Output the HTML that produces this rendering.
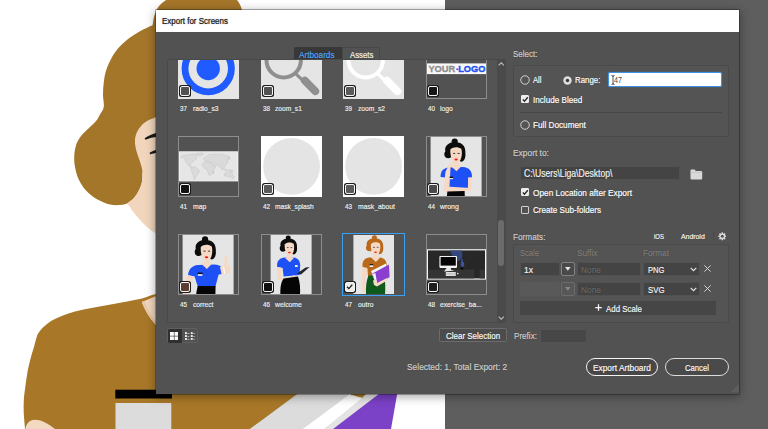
<!DOCTYPE html>
<html lang="en">
<head>
<meta charset="utf-8">
<title>Export for Screens</title>
<style>
*{box-sizing:border-box;margin:0;padding:0}
html,body{width:768px;height:429px;overflow:hidden;background:#5e5e5e}
body{position:relative;font-family:"Liberation Sans",sans-serif;font-size:9px;color:#fff}
#bg{position:absolute;left:0;top:0;width:768px;height:429px}
#dlg{position:absolute;left:156px;top:10px;width:583.4px;height:383.6px;background:#525252;box-shadow:0 2px 9px 1px rgba(0,0,0,.34),0 0 0 .8px rgba(20,20,20,.4)}
#titlebar{position:absolute;left:156px;top:10px;width:583.4px;height:21.9px;background:#fff}
.t{position:absolute;white-space:nowrap;line-height:12px;height:12px;transform-origin:0 50%;-webkit-text-stroke:0.2px currentColor;text-shadow:0 0 1.5px rgba(0,0,0,.35)}
.a{position:absolute}
.fld{position:absolute;background:#444;border-radius:2px;box-shadow:inset 0 0 0 1px rgba(255,255,255,.07)}
.box{position:absolute;border:1px solid #4a4a4a;border-radius:2px;background:rgba(255,255,255,.012)}
.radio{position:absolute;width:9.5px;height:9.5px;border-radius:50%;border:1px solid #e0e0e0}
.radio.on{background:#e4e4e4;border-color:#e4e4e4}
.radio.on::after{content:"";position:absolute;left:2px;top:2px;width:3.5px;height:3.5px;border-radius:50%;background:#3a3a3a}
.cb{position:absolute;width:8.2px;height:8.2px;border:1px solid #cfcfcf;border-radius:1px}
.cb.on{background:#ececec;border-color:#ececec}
.pill{position:absolute;height:19px;border-radius:10px;border:1px solid #f0f0f0}
.th{position:absolute;width:61px;height:61px;overflow:hidden}
.th svg{position:absolute;left:0;top:0;width:61px;height:61px;display:block}
.tcb{position:absolute;width:12px;height:12px;border-radius:2.5px;background:#1c1c1c;}
.tcb i{position:absolute;left:1px;top:1px;width:10px;height:10px;border-radius:2px;border:1.15px solid #f4f4f4;background:#333;display:block}
</style>
</head>
<body>
<!-- BACKGROUND ARTWORK -->
<svg id="bg" viewBox="0 0 768 429">
  <rect x="0" y="0" width="445" height="429" fill="#ffffff"/>
  <!-- hair -->
  <path d="M166,0 C165.17,0.67 162.50,2.50 161,4 C159.50,5.50 158.17,6.83 157,9 C155.83,11.17 154.75,14.33 154,17 C153.25,19.67 153.17,23.46 152.5,25 C151.83,26.54 152.08,25.21 150,26.25 C147.92,27.29 143.33,29.38 140,31.25 C136.67,33.12 133.33,35.00 130,37.5 C126.67,40.00 122.92,43.12 120,46.25 C117.08,49.38 114.79,52.29 112.5,56.25 C110.21,60.21 107.71,65.62 106.25,70 C104.79,74.38 104.29,78.33 103.75,82.5 C103.21,86.67 103.00,90.92 103,95 C103.00,99.08 104.25,103.75 103.75,107 C103.25,110.25 101.25,112.21 100,114.5 C98.75,116.79 98.12,118.46 96.25,120.75 C94.38,123.04 91.25,125.75 88.75,128.25 C86.25,130.75 83.33,133.04 81.25,135.75 C79.17,138.46 77.42,141.17 76.25,144.5 C75.08,147.83 74.46,152.00 74.25,155.75 C74.04,159.50 74.25,163.04 75,167 C75.75,170.96 76.88,175.54 78.75,179.5 C80.62,183.46 83.12,187.42 86.25,190.75 C89.38,194.08 93.54,197.21 97.5,199.5 C101.46,201.79 106.25,203.58 110,204.5 C113.75,205.42 117.08,205.21 120,205 C122.92,204.79 125.21,204.38 127.5,203.25 C129.79,202.12 131.88,200.33 133.75,198.25 C135.62,196.17 137.38,193.46 138.75,190.75 C140.12,188.04 141.38,185.12 142,182 C142.62,178.88 142.42,173.67 142.5,172 L242,172 L242,10 C241,6 239.5,3 237,0 Z" fill="#a4762a"/>
  <!-- face -->
  <path d="M160,116 C159.17,116.25 157.08,116.71 155,117.5 C152.92,118.29 149.79,119.38 147.5,120.75 C145.21,122.12 143.00,123.88 141.25,125.75 C139.50,127.62 138.04,129.71 137,132 C135.96,134.29 135.25,137.00 135,139.5 C134.75,142.00 135.08,144.50 135.5,147 C135.92,149.50 136.67,151.79 137.5,154.5 C138.33,157.21 139.67,160.33 140.5,163.25 C141.33,166.17 142.25,168.88 142.5,172 C142.75,175.12 142.62,178.88 142,182 C141.38,185.12 140.12,188.04 138.75,190.75 C137.38,193.46 135.62,196.17 133.75,198.25 C131.88,200.33 128.38,202.12 127.5,203.25 C126.62,204.38 128.08,204.38 128.5,205 C128.92,205.62 129.33,206.00 130,207 C130.67,208.00 131.67,209.83 132.5,211 C133.33,212.17 134.08,212.92 135,214 C135.92,215.08 137.00,216.33 138,217.5 C139.00,218.67 139.67,219.58 141,221 C142.33,222.42 144.17,224.33 146,226 C147.83,227.67 149.67,229.33 152,231 C154.33,232.67 158.67,235.17 160,236 Z" fill="#f1d6bd"/>
  <!-- lashes -->
  <path d="M144.6,138.2 C149,135.6 153,134 158,132.6 L158,136.8 C153,137.2 149,138.2 145.6,139.8 Z" fill="#1a1a1a"/>
  <path d="M149.6,152.8 C152,151.4 155,150.2 158,149.6 L158,153 C155,153 152,153.6 150.2,154.4 Z" fill="#1a1a1a"/>
  <!-- shirt -->
  <path d="M160,293 C157,294 154,294.5 152,295 C148,296.3 145,297.6 142,298.5 C132,300.6 122,302.4 112,304.2 C99,306.4 86,308.8 75,311.5 C66,314 58,317 51,321 C45,325 40,330 37.5,334.5 C36,339 35,343 34,347 C31,356 29,364 27.5,372 C26,381 25,389 24,397 C23.5,404 23.5,411 24,417 L25,429 L250,429 L300,394.5 L300,380 L160,380 Z" fill="#a87828"/>
  <!-- neck -->
  <path d="M141.8,302 L160,294.6 L160,328 L156,325 Q146.5,315 141.8,302 Z" fill="#f1d6bd"/>
  <path d="M141.8,302 Q146.5,315 156,325 L157.5,324 Q149,314 144.6,301 Z" fill="#e8c8ab"/>
  <!-- arm -->
  <path d="M25.5,429 C25.5,426 27,423 30,421 C34,419 39,419.5 44,422 C48,424 52,426.5 55,429 Z" fill="#f4d9c2"/>
  <!-- tag -->
  <rect x="115.3" y="389.7" width="56.7" height="8.8" fill="#000000"/>
  <rect x="115.5" y="403" width="55.8" height="27" fill="#dcdcdc"/>
  <!-- bottom right stripes -->
  <path d="M300,392 L350,392 L350,394 L303,429 L250,429 Z" fill="#dcdcdc"/>
  <path d="M350,392 L368,392 L368,394 L364,398 L352,397 Z" fill="#a87828"/>
  <path d="M352,395 L362,398 L324,429 L303,429 Z" fill="#ffffff"/>
  <path d="M362,398 L368,392 L382,392 L333,429 L324,429 Z" fill="#e4e4e4"/>
  <path d="M381.5,392 L397.5,392 L391,429 L333,429 Z" fill="#7b41c6"/>
</svg>

<!-- DIALOG -->
<div id="dlg"></div>
<div id="titlebar"></div>

<div class="t" style="left:162.00px;top:15.40px;font-size:9.7px;color:#1c1c1c;transform:scaleX(0.8217);">Export for Screens</div>
<!-- LEFT PANEL -->
<div class="a" style="left:293.5px;top:46.5px;width:86.5px;height:13.5px;border:1px solid #474747;border-bottom:none;border-radius:2px 2px 0 0"></div>
<div class="a" style="left:294px;top:47px;width:48px;height:13px;background:#383838;border-radius:2px 0 0 0"></div>
<div class="a" style="left:342.3px;top:47px;width:1px;height:13px;background:#474747"></div>
<div class="t" style="left:299.00px;top:48.60px;font-size:9.9px;color:#4ea8ff;transform:scaleX(0.8295);">Artboards</div>
<div class="t" style="left:349.50px;top:48.60px;font-size:9.9px;color:#f4f4f4;transform:scaleX(0.7910);">Assets</div>
<div class="box" style="left:167px;top:59.3px;width:339px;height:263.4px;border-color:#494949;border-radius:1px"></div>
<div class="a" style="left:497.3px;top:60.3px;width:7.7px;height:261.4px;background:#4a4a4a"></div>
<div class="a" style="left:498.1px;top:220px;width:6.2px;height:45.5px;background:#6b6b6b;border-radius:3.3px"></div>
<svg class="a" style="left:497.9px;top:62px" width="6.6" height="4" viewBox="0 0 6.6 4"><path d="M0.6,3.4 L3.3,0.8 L6,3.4" fill="none" stroke="#bcbcbc" stroke-width="1.1"/></svg>
<svg class="a" style="left:497.9px;top:315.6px" width="6.6" height="4" viewBox="0 0 6.6 4"><path d="M0.6,0.6 L3.3,3.2 L6,0.6" fill="none" stroke="#bcbcbc" stroke-width="1.1"/></svg>
<div class="th" style="left:178px;top:60.0px;height:38.7px"><svg viewBox="0 0 61 61" style="top:-22.3px"><rect width="61" height="61" fill="#e5e5e5"/><circle cx="30.2" cy="30.6" r="23.2" fill="none" stroke="#1f5bff" stroke-width="6.8"/><circle cx="30.2" cy="30.6" r="11.7" fill="#1f5bff"/></svg></div>
<div class="th" style="left:260.6px;top:60.0px;height:38.7px"><svg viewBox="0 0 61 61" style="top:-22.3px"><rect width="61" height="61" fill="#e5e5e5"/><circle cx="22.7" cy="22.2" r="17.2" fill="none" stroke="#8f8f8f" stroke-width="4"/><path d="M34.4,35.4 L43,43.6" stroke="#8f8f8f" stroke-width="3.2"/><path d="M43.8,42.6 L54.3,53.2" stroke="#8f8f8f" stroke-width="7.8" stroke-linecap="round"/></svg></div>
<div class="th" style="left:343px;top:60.0px;height:38.7px"><svg viewBox="0 0 61 61" style="top:-22.3px"><rect width="61" height="61" fill="#e5e5e5"/><circle cx="22.7" cy="22.2" r="17.2" fill="none" stroke="#ffffff" stroke-width="4"/><path d="M34.4,35.4 L43,43.6" stroke="#ffffff" stroke-width="3.2"/><path d="M43.8,42.6 L54.3,53.2" stroke="#ffffff" stroke-width="7.8" stroke-linecap="round"/></svg></div>
<div class="th" style="left:425.6px;top:60.0px;height:38.7px"><svg viewBox="0 0 61 61" style="top:-22.3px"><rect width="61" height="61" fill="#525252"/><rect x="1" y="25.4" width="59" height="10.7" fill="#f8f8f8"/><rect x="0.5" y="0.5" width="60" height="60" fill="none" stroke="#8d8d8d" stroke-width="1"/><text x="2.4" y="33.6" font-family="Liberation Sans, sans-serif" font-weight="bold" font-size="9.1" textLength="57" lengthAdjust="spacingAndGlyphs"><tspan fill="#8e8e8e" stroke="#8e8e8e" stroke-width="0.35">YOUR</tspan><tspan fill="#2f5cf0" font-size="3.4" dy="-2" dx="0.5">&#9670;</tspan><tspan fill="#2050f0" stroke="#2050f0" stroke-width="0.35" dy="2" dx="0.5">LOGO</tspan></text></svg></div>
<div class="tcb" style="left:179.4px;top:85.1px"><i style="background:#525252"></i></div>
<div class="tcb" style="left:262.0px;top:85.1px"><i style="background:#525252"></i></div>
<div class="tcb" style="left:344.4px;top:85.1px"><i style="background:#5a5a5a"></i></div>
<div class="tcb" style="left:427.0px;top:85.1px"><i style="background:#161616"></i></div>
<div class="t" style="left:180.00px;top:103.20px;font-size:8px;color:#f0f0f0;transform:scaleX(0.7867);">37</div>
<div class="t" style="left:192.60px;top:103.20px;font-size:8px;color:#f0f0f0;transform:scaleX(0.8278);">radio_s3</div>
<div class="t" style="left:262.60px;top:103.20px;font-size:8px;color:#f0f0f0;transform:scaleX(0.7867);">38</div>
<div class="t" style="left:275.20px;top:103.20px;font-size:8px;color:#f0f0f0;transform:scaleX(0.8257);">zoom_s1</div>
<div class="t" style="left:345.00px;top:103.20px;font-size:8px;color:#f0f0f0;transform:scaleX(0.7867);">39</div>
<div class="t" style="left:357.60px;top:103.20px;font-size:8px;color:#f0f0f0;transform:scaleX(0.8287);">zoom_s2</div>
<div class="t" style="left:427.60px;top:103.20px;font-size:8px;color:#f0f0f0;transform:scaleX(0.7867);">40</div>
<div class="t" style="left:440.20px;top:103.20px;font-size:8px;color:#f0f0f0;transform:scaleX(0.8464);">logo</div>
<div class="th" style="left:178px;top:135.7px;height:61px"><svg viewBox="0 0 61 61" style="top:0px"><rect width="61" height="61" fill="#525252"/><rect x="1" y="15.3" width="59" height="30.1" fill="#f4f4f4"/><rect x="1.7" y="16" width="57.6" height="28.7" fill="#e6e6e6"/><g fill="#dadada" stroke="#b6b6b6" stroke-width="0.32" stroke-linejoin="round"><path d="M2.7,20.5 L4.9,19.2 L9.2,18.7 L12.6,18.3 L16.5,17.9 L19,18.7 L18.6,20.9 L18.2,23 L16.5,24.3 L14.8,26 L13,27.3 L12.2,29 L13.5,30.8 L12.6,31.2 L10.9,29.9 L9.2,27.8 L7.5,25.2 L6.6,22.6 L4.4,21.3 L2.7,21.7 Z"/><path d="M18.6,17.5 L22.9,17 L25.5,17.6 L23.8,19.6 L20.8,20 Z"/><path d="M13.5,31.2 L16.5,30.8 L19.5,32.5 L21.6,34.6 L20.5,37.2 L18.6,39.4 L17.3,42.4 L16.2,43.7 L15.6,41.5 L14.8,38.1 L13.5,35.1 L13,32.9 Z"/><path d="M25.5,23 L26.8,21.3 L28.9,20.5 L30.6,18.7 L34.1,18.3 L38.4,17.9 L44.4,18.3 L49.5,19.6 L52.1,20.9 L51.7,23 L49.5,24.3 L50,26.5 L47.8,28.2 L47,30.8 L45.3,32.5 L44.4,34.2 L43.1,32.5 L42.7,30.3 L41,30.8 L39.7,28.6 L38.4,29 L37.1,31.2 L35.8,29 L34.1,27.3 L31.9,26.5 L30.6,25.2 L28.5,25.2 L26.4,24.8 Z"/><path d="M24.6,27.3 L27.2,26 L31.1,26 L34.1,27.8 L35.4,29.9 L37.1,31.6 L35.8,33.8 L34.9,35.9 L33.7,38.1 L31.9,39.8 L30.6,38.9 L29.8,35.9 L28.9,33.3 L26.8,32.5 L25.1,30.8 L24.2,29 Z"/><path d="M35.1,35.9 L36,35.5 L35.8,37.6 L34.9,37.9 Z"/><path d="M45.7,33.3 L47.8,32.9 L49.5,34.2 L47.4,34.8 Z"/><path d="M50.4,33.8 L53.8,34.2 L55.6,35.1 L53,35.3 Z"/><path d="M46.1,38.1 L48.3,36.4 L50.8,35.5 L53.8,36.4 L55.1,38.5 L53.8,40.7 L51.3,41.1 L48.7,40.2 L46.5,39.8 Z"/><path d="M55.6,40.7 L56.8,40.2 L55.1,42.4 L53.8,42.5 Z"/><path d="M50,22.2 L51.3,20.9 L51.7,22.6 L50.4,23.9 Z"/></g><rect x="0.5" y="0.5" width="60" height="60" fill="none" stroke="#8d8d8d" stroke-width="1"/></svg></div>
<div class="th" style="left:260.6px;top:135.7px;height:61px"><svg viewBox="0 0 61 61" style="top:0px"><rect width="61" height="61" fill="#ffffff"/><circle cx="30.6" cy="30.4" r="28.4" fill="#e4e4e4"/></svg></div>
<div class="th" style="left:343px;top:135.7px;height:61px"><svg viewBox="0 0 61 61" style="top:0px"><rect width="61" height="61" fill="#ffffff"/><circle cx="30.6" cy="30.4" r="28.4" fill="#e4e4e4"/></svg></div>
<div class="th" style="left:425.6px;top:135.7px;height:61px"><svg viewBox="0 0 61 61" style="top:0px"><rect width="61" height="61" fill="#525252"/><rect x="4.6" y="1" width="51" height="59" fill="#e5e5e5"/><path d="M14.6,41 C14.4,35 17,32 23,31.4 L37,31 C43,31.4 46.4,35 46,41.6 L42.4,41.8 L42.6,52 L20.6,52.6 L19.6,41.6 Z" fill="#1d50f5"/><path d="M42.2,41.6 L46,41.6 L44.8,54 L41.8,54 Z" fill="#f6d9c4"/><path d="M17.6,53.6 C17,51 18,50 19.6,50.4 L44.6,52 L44.8,55 L20,56.4 Z" fill="#f6d9c4"/><path d="M18,52 L19.4,36 L23.4,27.6 L25.6,25.6 L26.6,27 L24.6,30.4 L23.4,52 Z" fill="#f6d9c4"/><rect x="23.6" y="40.6" width="3.4" height="1.4" fill="#0a0a0a"/><rect x="24" y="42" width="3" height="1.2" fill="#e8e8f4"/><path d="M20.8,61 L21.4,55.6 L38.6,55 L38.8,61 Z" fill="#050505"/><ellipse cx="28.70" cy="5.50" rx="3.10" ry="2.90" fill="#0c0c0c"/><path d="M19.40,15.30 C17.90,9.30 23.90,5.80 28.90,6.30 C35.90,5.80 39.90,10.30 39.40,17.30 C39.90,22.30 37.90,25.30 35.40,25.80 L24.90,21.30 C22.90,23.30 18.90,22.30 18.40,19.30 C18.10,17.30 18.60,16.30 19.40,15.30 Z" fill="#0c0c0c"/><path d="M27.30,24.30 L33.10,24.30 L33.50,31.30 L26.70,31.30 Z" fill="#f6d9c4"/><path d="M24.30,29.50 L36.10,29.50 L30.50,35.30 Z" fill="#f6d9c4"/><path d="M24.40,13.30 C26.90,10.80 31.90,10.30 35.40,12.80 C36.40,17.30 35.90,22.30 33.40,25.80 C31.90,27.90 29.40,28.10 27.90,26.60 C25.40,23.80 23.90,18.30 24.40,13.30 Z" fill="#f6d9c4"/><rect x="27.00" y="16.90" width="2.20" height="1.10" fill="#4a4f58"/><rect x="31.50" y="16.90" width="2.20" height="1.10" fill="#4a4f58"/><ellipse cx="30.10" cy="23.50" rx="1.70" ry="0.95" fill="#ee1c1c"/><rect x="0.5" y="0.5" width="60" height="60" fill="none" stroke="#8d8d8d" stroke-width="1"/></svg></div>
<div class="tcb" style="left:179.4px;top:183.1px"><i style="background:#111"></i></div>
<div class="tcb" style="left:262.0px;top:183.1px"><i style="background:#5a5a5a"></i></div>
<div class="tcb" style="left:344.4px;top:183.1px"><i style="background:#5a5a5a"></i></div>
<div class="tcb" style="left:427.0px;top:183.1px"><i style="background:#4a4a4a"></i></div>
<div class="t" style="left:180.00px;top:201.40px;font-size:8px;color:#f0f0f0;transform:scaleX(0.7867);">41</div>
<div class="t" style="left:192.60px;top:201.40px;font-size:8px;color:#f0f0f0;transform:scaleX(0.8611);">map</div>
<div class="t" style="left:262.60px;top:201.40px;font-size:8px;color:#f0f0f0;transform:scaleX(0.7867);">42</div>
<div class="t" style="left:275.20px;top:201.40px;font-size:8px;color:#f0f0f0;transform:scaleX(0.8311);">mask_splash</div>
<div class="t" style="left:345.00px;top:201.40px;font-size:8px;color:#f0f0f0;transform:scaleX(0.7867);">43</div>
<div class="t" style="left:357.60px;top:201.40px;font-size:8px;color:#f0f0f0;transform:scaleX(0.8467);">mask_about</div>
<div class="t" style="left:427.60px;top:201.40px;font-size:8px;color:#f0f0f0;transform:scaleX(0.7867);">44</div>
<div class="t" style="left:440.20px;top:201.40px;font-size:8px;color:#f0f0f0;transform:scaleX(0.8629);">wrong</div>
<div class="th" style="left:178px;top:233.7px;height:61px"><svg viewBox="0 0 61 61" style="top:0px"><rect width="61" height="61" fill="#525252"/><rect x="4.6" y="1" width="51" height="59" fill="#e5e5e5"/><path d="M10,41.6 C10.6,35 14,31.6 20,31 L36,30.6 C40,30.8 43,32 44,34 L44.4,40 L40.6,40.6 L37.6,52 L19.6,52 L16.6,42.6 Z" fill="#1d50f5"/><path d="M6,52 C6.4,47 8,43 10.4,41 L16.4,42.4 C14,46 13,50 12.6,54 L12,61 L6,61 Z" fill="#f6d9c4"/><path d="M42,33 L46.2,32.2 L46.6,23.6 C46.8,21.6 49.4,21.6 49.5,23.6 L49.8,31.2 L52.2,32.2 L52,39.4 L43.6,40.4 Z" fill="#f6d9c4"/><path d="M45.6,33 L46.6,39.6" stroke="#ffffff" stroke-width="1.1"/><rect x="19.6" y="38.6" width="5" height="1.6" fill="#0a0a0a"/><rect x="19.8" y="40.2" width="4.6" height="1.6" fill="#f2f2fa"/><path d="M18,61 L19.6,52 L37.6,52 L37.4,61 Z" fill="#050505"/><ellipse cx="27.10" cy="5.20" rx="3.10" ry="2.90" fill="#0c0c0c"/><path d="M17.80,15.00 C16.30,9.00 22.30,5.50 27.30,6.00 C34.30,5.50 38.30,10.00 37.80,17.00 C38.30,22.00 36.30,25.00 33.80,25.50 L23.30,21.00 C21.30,23.00 17.30,22.00 16.80,19.00 C16.50,17.00 17.00,16.00 17.80,15.00 Z" fill="#0c0c0c"/><path d="M25.70,24.00 L31.50,24.00 L31.90,31.00 L25.10,31.00 Z" fill="#f6d9c4"/><path d="M22.70,29.20 L34.50,29.20 L28.90,35.00 Z" fill="#f6d9c4"/><path d="M22.80,13.00 C25.30,10.50 30.30,10.00 33.80,12.50 C34.80,17.00 34.30,22.00 31.80,25.50 C30.30,27.60 27.80,27.80 26.30,26.30 C23.80,23.50 22.30,18.00 22.80,13.00 Z" fill="#f6d9c4"/><rect x="25.40" y="16.60" width="2.20" height="1.10" fill="#4a4f58"/><rect x="29.90" y="16.60" width="2.20" height="1.10" fill="#4a4f58"/><ellipse cx="28.50" cy="23.20" rx="1.70" ry="0.95" fill="#ee1c1c"/><rect x="0.5" y="0.5" width="60" height="60" fill="none" stroke="#8d8d8d" stroke-width="1"/></svg></div>
<div class="th" style="left:260.6px;top:233.7px;height:61px"><svg viewBox="0 0 61 61" style="top:0px"><rect width="61" height="61" fill="#525252"/><rect x="9.6" y="1" width="41" height="59" fill="#e5e5e5"/><path d="M16.2,33 C15.6,27.6 18,24.4 23,23.6 L33,23.4 C37,24 39,27 39.2,31 L38.6,41 L22.6,42.6 L21.6,34 Z" fill="#1d50f5"/><path d="M16.2,33 L21.4,34 L19.6,43.6 L28,44.4 L33,41 L35,43.6 L29,47 L17,46 C15.6,42 15.6,37 16.2,33 Z" fill="#f6d9c4"/><path d="M19.4,61 C19,54 20,48 22.6,44.6 L37,42.6 C39,48 39.4,55 39,61 Z" fill="#050505"/><path d="M36,39.6 L44.6,33.6 L48.6,33 L40,40.6 Z" fill="#222831"/><rect x="34" y="31" width="2.6" height="2" fill="#f2f2fa"/><ellipse cx="27.24" cy="3.82" rx="2.54" ry="2.38" fill="#0c0c0c"/><path d="M19.61,11.86 C18.38,6.94 23.30,4.07 27.40,4.48 C33.14,4.07 36.42,7.76 36.01,13.50 C36.42,17.60 34.78,20.06 32.73,20.47 L24.12,16.78 C22.48,18.42 19.20,17.60 18.79,15.14 C18.54,13.50 18.95,12.68 19.61,11.86 Z" fill="#0c0c0c"/><path d="M26.09,19.24 L30.84,19.24 L31.17,24.98 L25.60,24.98 Z" fill="#f6d9c4"/><path d="M23.63,23.50 L33.30,23.50 L28.71,28.26 Z" fill="#f6d9c4"/><path d="M23.71,10.22 C25.76,8.17 29.86,7.76 32.73,9.81 C33.55,13.50 33.14,17.60 31.09,20.47 C29.86,22.19 27.81,22.36 26.58,21.13 C24.53,18.83 23.30,14.32 23.71,10.22 Z" fill="#f6d9c4"/><rect x="25.84" y="13.17" width="1.80" height="0.90" fill="#4a4f58"/><rect x="29.53" y="13.17" width="1.80" height="0.90" fill="#4a4f58"/><ellipse cx="28.38" cy="18.58" rx="1.39" ry="0.78" fill="#ee1c1c"/><rect x="0.5" y="0.5" width="60" height="60" fill="none" stroke="#8d8d8d" stroke-width="1"/></svg></div>
<div class="a" style="left:342px;top:232.7px;width:63px;height:63px;border:1.1px solid #3b9ff2"></div>
<div class="th" style="left:343px;top:233.7px;height:61px"><svg viewBox="0 0 61 61" style="top:0px"><rect width="61" height="61" fill="#525252"/><rect x="10.4" y="1" width="40.6" height="59" fill="#e5e5e5"/><path d="M19.6,33 C19,27.6 21,24.4 26,23.6 L37,23.4 C41.6,24 43.6,27 43.8,31 L43,36 L40,36.4 L39.6,42 L25,42 L24.4,35 Z" fill="#b8691c"/><path d="M19.6,33 L24.4,34 L22.6,46 L21.6,58 L19.4,58 C18.6,48 18.6,40 19.6,33 Z" fill="#f6d9c4"/><path d="M23,60 C22.6,53 23.4,47 25.4,41.6 L41,41.6 C42.4,48 42.6,54 42,60 Z" fill="#0d5a1c"/><path d="M28,37 L43,29.6 L45,41 L32,48 Z" fill="#f4f4f8"/><path d="M29.4,39.6 L46,30.6 L46.6,43 L33.4,52 Z" fill="#8a3fd0"/><path d="M29.6,40 L32.4,39 L34.4,51 L33.4,52 Z" fill="#f4f4f8"/><path d="M30,46.6 L33,45.6 L34,49 L44,44 L45,46 L34,52.6 L31,51 Z" fill="#f6d9c4"/><rect x="26.6" y="30.2" width="3.6" height="1.2" fill="#0a0a0a"/><rect x="26.6" y="31.4" width="3.6" height="1.6" fill="#f2f2fa"/><ellipse cx="31.44" cy="3.52" rx="2.54" ry="2.38" fill="#b8691c"/><path d="M23.81,11.56 C22.58,6.64 27.50,3.77 31.60,4.18 C37.34,3.77 40.62,7.46 40.21,13.20 C40.62,17.30 38.98,19.76 36.93,20.17 L28.32,16.48 C26.68,18.12 23.40,17.30 22.99,14.84 C22.74,13.20 23.15,12.38 23.81,11.56 Z" fill="#b8691c"/><path d="M30.29,18.94 L35.04,18.94 L35.37,24.68 L29.80,24.68 Z" fill="#f6d9c4"/><path d="M27.83,23.20 L37.50,23.20 L32.91,27.96 Z" fill="#f6d9c4"/><path d="M27.91,9.92 C29.96,7.87 34.06,7.46 36.93,9.51 C37.75,13.20 37.34,17.30 35.29,20.17 C34.06,21.89 32.01,22.06 30.78,20.83 C28.73,18.53 27.50,14.02 27.91,9.92 Z" fill="#f6d9c4"/><rect x="30.04" y="12.87" width="1.80" height="0.90" fill="#4a4f58"/><rect x="33.73" y="12.87" width="1.80" height="0.90" fill="#4a4f58"/><ellipse cx="32.58" cy="18.28" rx="1.39" ry="0.78" fill="#ee1c1c"/></svg></div>
<div class="th" style="left:425.6px;top:233.7px;height:61px"><svg viewBox="0 0 61 61" style="top:0px"><rect width="61" height="61" fill="#525252"/><rect x="1" y="15.2" width="59" height="30.4" fill="#f4f4f4"/><rect x="2" y="16.4" width="57" height="28" fill="#272727"/><rect x="2" y="35.6" width="46" height="8.8" fill="#343434"/><rect x="53.6" y="35.6" width="5.4" height="8.8" fill="#363636"/><path d="M24,16.4 L36,16.4 L36.4,22 C36,26 33,27.6 30,27 L27,23.6 Z" fill="#34487e"/><path d="M34.6,30.6 L35.6,25 L36.8,25 L36.8,28 L38.2,28.6 L38.2,32 L36,33.6 Z" fill="#3b55a0"/><circle cx="36" cy="34.4" r="1.3" fill="#0d0d0d"/><rect x="13.4" y="21.9" width="17.6" height="12" rx="0.8" fill="#f2f2f2"/><rect x="14.6" y="23" width="15.2" height="8.6" fill="#050505"/><path d="M20.6,34 L24.6,34 L25.4,36 L29,36.6 L18,37.4 Z" fill="#e9e9e9"/><rect x="19.8" y="38" width="10" height="4" rx="0.5" fill="#e4e4e4"/><path d="M19.8,39.4 L29.8,39.4 M19.8,40.7 L29.8,40.7" stroke="#8a8a8a" stroke-width="0.35"/><circle cx="31.8" cy="39.6" r="0.8" fill="#f2f2f2"/><rect x="0.5" y="0.5" width="60" height="60" fill="none" stroke="#8d8d8d" stroke-width="1"/></svg></div>
<div class="tcb" style="left:179.4px;top:281.09999999999997px"><i style="background:#5a3e32"></i></div>
<div class="tcb" style="left:262.0px;top:281.09999999999997px"><i style="background:#101010"></i></div>
<div class="tcb" style="left:344.4px;top:281.09999999999997px"><i style="background:#ececec"><svg class="a" style="left:0;top:0" width="7.2" height="7.2" viewBox="0 0 7.2 7.2"><path d="M1,3.7 L2.9,5.6 L6.3,1.6" fill="none" stroke="#1a1a1a" stroke-width="1.3"/></svg></i></div>
<div class="tcb" style="left:427.0px;top:281.09999999999997px"><i style="background:#1e1e1e"></i></div>
<div class="t" style="left:180.00px;top:299.40px;font-size:8px;color:#f0f0f0;transform:scaleX(0.7867);">45</div>
<div class="t" style="left:192.60px;top:299.40px;font-size:8px;color:#f0f0f0;transform:scaleX(0.8344);">correct</div>
<div class="t" style="left:262.60px;top:299.40px;font-size:8px;color:#f0f0f0;transform:scaleX(0.7867);">46</div>
<div class="t" style="left:275.20px;top:299.40px;font-size:8px;color:#f0f0f0;transform:scaleX(0.8490);">welcome</div>
<div class="t" style="left:345.00px;top:299.40px;font-size:8px;color:#f0f0f0;transform:scaleX(0.7867);">47</div>
<div class="t" style="left:357.60px;top:299.40px;font-size:8px;color:#f0f0f0;transform:scaleX(0.8446);">outro</div>
<div class="t" style="left:427.60px;top:299.40px;font-size:8px;color:#f0f0f0;transform:scaleX(0.7867);">48</div>
<div class="t" style="left:440.20px;top:299.40px;font-size:8px;color:#f0f0f0;transform:scaleX(0.8393);">exercise_ba...</div>
<div class="a" style="left:167px;top:327.7px;width:31.2px;height:15.6px;border:1px solid #5f5f5f;border-radius:2px"></div>
<div class="a" style="left:167.7px;top:328.5px;width:14.3px;height:14.1px;background:#303030;border-radius:1.5px 0 0 1.5px"></div>
<svg class="a" style="left:169.9px;top:331.5px" width="8.4" height="8.2" viewBox="0 0 8.4 8.2"><g fill="#fbfbfb"><rect x="0" y="0" width="3.9" height="3.8"/><rect x="4.5" y="0" width="3.9" height="3.8"/><rect x="0" y="4.4" width="3.9" height="3.8"/><rect x="4.5" y="4.4" width="3.9" height="3.8"/></g></svg>
<svg class="a" style="left:185.4px;top:331.5px" width="10" height="8.2" viewBox="0 0 10 8.2"><rect x="0" y="0.2" width="1.9" height="1.9" fill="#f2f2f2"/><rect x="2.5" y="1.1" width="1.8" height="0.9" fill="#bdbdbd"/><rect x="5.8" y="0.2" width="1.9" height="1.9" fill="#f2f2f2"/><rect x="8.3" y="1.1" width="1.5" height="0.9" fill="#bdbdbd"/><rect x="0" y="3.1" width="1.9" height="1.9" fill="#f2f2f2"/><rect x="2.5" y="4.0" width="1.8" height="0.9" fill="#bdbdbd"/><rect x="5.8" y="3.1" width="1.9" height="1.9" fill="#f2f2f2"/><rect x="8.3" y="4.0" width="1.5" height="0.9" fill="#bdbdbd"/><rect x="0" y="6.0" width="1.9" height="1.9" fill="#f2f2f2"/><rect x="2.5" y="6.9" width="1.8" height="0.9" fill="#bdbdbd"/><rect x="5.8" y="6.0" width="1.9" height="1.9" fill="#f2f2f2"/><rect x="8.3" y="6.9" width="1.5" height="0.9" fill="#bdbdbd"/></svg>
<div class="a" style="left:439px;top:328px;width:68px;height:14.4px;border:1px solid #6c6c6c;border-radius:1.5px;background:#4c4c4c"></div>
<div class="t" style="left:445.75px;top:329.70px;font-size:9.9px;color:#fafafa;transform:scaleX(0.8081);">Clear Selection</div>
<div class="t" style="left:406.50px;top:360.90px;font-size:9.9px;color:#cfcfcf;transform:scaleX(0.8508);">Selected: 1, Total Export: 2</div>
<!-- RIGHT PANEL -->
<div class="t" style="left:513.00px;top:48.40px;font-size:9.9px;color:#cdcdcd;transform:scaleX(0.8095);">Select:</div>
<div class="box" style="left:513px;top:65px;width:216px;height:72px"></div>
<svg class="a" style="left:520.25px;top:75px" width="10" height="10" viewBox="-5 -5 10 10"><circle r="4.25" fill="none" stroke="#dcdcdc" stroke-width="0.9"/></svg>
<div class="t" style="left:532.50px;top:74.40px;font-size:9.9px;color:#fff;transform:scaleX(0.7725);">All</div>
<svg class="a" style="left:563.1px;top:75.5px" width="9" height="9" viewBox="-4.5 -4.5 9 9"><circle r="4.2" fill="#dedede"/><circle r="1.7" fill="#3a3a3a"/></svg>
<div class="t" style="left:575.00px;top:74.40px;font-size:9.9px;color:#fff;transform:scaleX(0.7988);">Range:</div>
<div class="a" style="left:608px;top:72.3px;width:114px;height:14.8px;background:#fff;border:1.2px solid #3d92e6;border-radius:2px;box-shadow:0 0 1px #3d92e6"></div>
<svg class="a" style="left:610.6px;top:75px" width="4" height="10" viewBox="0 0 4 10"><path d="M0.4,0.4 Q2,0.4 2,1.6 Q2,0.4 3.6,0.4 M2,1.2 L2,8.8 M0.4,9.6 Q2,9.6 2,8.4 Q2,9.6 3.6,9.6" fill="none" stroke="#2a2a2a" stroke-width="0.8"/></svg>
<div class="t" style="left:613.60px;top:74.20px;font-size:9.6px;color:#4a4a4a;transform:scaleX(0.7493);-webkit-text-stroke:0;text-shadow:none;">47</div>
<div class="cb on" style="left:520.5px;top:94.7px"><svg class="a" style="left:-1px;top:-1px" width="8.5" height="8.5" viewBox="0 0 8.5 8.5"><path d="M1.8,4.4 L3.5,6.2 L6.8,2.2" fill="none" stroke="#2b2b2b" stroke-width="1.4"/></svg></div>
<div class="t" style="left:532.50px;top:94.20px;font-size:9.9px;color:#fff;transform:scaleX(0.8251);">Include Bleed</div>
<div class="a" style="left:520px;top:111.7px;width:202px;height:1px;background:#474747"></div>
<svg class="a" style="left:520.25px;top:120px" width="10" height="10" viewBox="-5 -5 10 10"><circle r="4.25" fill="none" stroke="#dcdcdc" stroke-width="0.9"/></svg>
<div class="t" style="left:532.50px;top:119.40px;font-size:9.9px;color:#fff;transform:scaleX(0.8305);">Full Document</div>
<div class="t" style="left:513.00px;top:147.40px;font-size:9.9px;color:#cdcdcd;transform:scaleX(0.8497);">Export to:</div>
<div class="fld" style="left:520px;top:166px;width:159.5px;height:14px"></div>
<div class="t" style="left:524.00px;top:167.40px;font-size:10.6px;color:#f2f2f2;transform:scaleX(0.8121);">C:\Users\Liga\Desktop\</div>
<svg class="a" style="left:689.5px;top:168.5px" width="13" height="11" viewBox="0 0 13 11"><path d="M0.5,1.6 Q0.5,0.6 1.5,0.6 L4.6,0.6 L5.8,1.9 L11.2,1.9 Q12.2,1.9 12.2,2.9 L12.2,9.6 Q12.2,10.4 11.4,10.4 L1.3,10.4 Q0.5,10.4 0.5,9.6 Z" fill="#d9d9d9"/><path d="M0.5,3.4 L12.2,3.4" stroke="#bdbdbd" stroke-width="0.7"/></svg>
<div class="cb on" style="left:520.5px;top:188.2px"><svg class="a" style="left:-1px;top:-1px" width="8.5" height="8.5" viewBox="0 0 8.5 8.5"><path d="M1.8,4.4 L3.5,6.2 L6.8,2.2" fill="none" stroke="#2b2b2b" stroke-width="1.4"/></svg></div>
<div class="t" style="left:532.50px;top:186.90px;font-size:9.9px;color:#fff;transform:scaleX(0.8389);">Open Location after Export</div>
<div class="cb" style="left:520.5px;top:205.8px"></div>
<div class="t" style="left:532.50px;top:204.40px;font-size:9.9px;color:#fff;transform:scaleX(0.8214);">Create Sub-folders</div>
<div class="t" style="left:513.00px;top:230.90px;font-size:9.9px;color:#cdcdcd;transform:scaleX(0.8322);">Formats:</div>
<div class="t" style="left:654.00px;top:230.90px;font-size:7.6px;color:#f4f4f4;transform:scaleX(0.7893);">iOS</div>
<div class="t" style="left:681.00px;top:230.90px;font-size:7.6px;color:#f4f4f4;transform:scaleX(0.9067);">Android</div>
<div class="a" style="left:713px;top:231px;width:1px;height:10px;background:#484848"></div>
<svg class="a" style="left:717.7px;top:232.2px" width="8.6" height="8.6" viewBox="-5 -5 10 10"><g fill="#dcdcdc"><circle r="3.2"/><g id="gt"><rect x="-0.9" y="-4.6" width="1.8" height="9.2" rx="0.4"/></g><rect x="-0.9" y="-4.6" width="1.8" height="9.2" rx="0.4" transform="rotate(45)"/><rect x="-0.9" y="-4.6" width="1.8" height="9.2" rx="0.4" transform="rotate(90)"/><rect x="-0.9" y="-4.6" width="1.8" height="9.2" rx="0.4" transform="rotate(135)"/></g><circle r="1.75" fill="#525252"/></svg>
<div class="box" style="left:513px;top:243.5px;width:216px;height:79px"></div>
<div class="t" style="left:520.00px;top:246.70px;font-size:9.9px;color:#7e7e7e;transform:scaleX(0.7672);">Scale</div>
<div class="t" style="left:577.00px;top:246.70px;font-size:9.9px;color:#7e7e7e;transform:scaleX(0.8340);">Suffix</div>
<div class="t" style="left:643.00px;top:246.70px;font-size:9.9px;color:#7e7e7e;transform:scaleX(0.8293);">Format</div>
<div class="fld" style="left:519.5px;top:262px;width:40.5px;height:14px"></div>
<div class="t" style="left:524.00px;top:263.50px;font-size:9.9px;color:#f2f2f2;transform:scaleX(0.8608);">1x</div>
<div class="a" style="left:561px;top:262px;width:13.5px;height:14px;border:1px solid #828282;border-radius:2px;background:#494949"></div>
<svg class="a" style="left:565px;top:267.4px" width="5.6" height="3.7" viewBox="0 0 6.4 4.2"><path d="M0,0 L6.4,0 L3.2,4.2 Z" fill="#e6e6e6"/></svg>
<div class="fld" style="left:577px;top:262px;width:64px;height:14px"></div>
<div class="t" style="left:580.50px;top:263.50px;font-size:9.9px;color:#696969;transform:scaleX(0.8451);">None</div>
<div class="fld" style="left:643px;top:262px;width:57px;height:14px"></div>
<div class="t" style="left:647.50px;top:263.50px;font-size:9.9px;color:#f4f4f4;transform:scaleX(0.7691);">PNG</div>
<svg class="a" style="left:690px;top:266.8px" width="7" height="5" viewBox="0 0 7 5"><path d="M0.7,0.9 L3.5,3.7 L6.3,0.9" fill="none" stroke="#e6e6e6" stroke-width="1.2"/></svg>
<svg class="a" style="left:704px;top:265.1px" width="7" height="7" viewBox="0 0 7 7"><path d="M0.4,0.4 L6.6,6.6 M6.6,0.4 L0.4,6.6" fill="none" stroke="#dadada" stroke-width="0.95"/></svg>
<div class="fld" style="left:519.5px;top:282px;width:40.5px;height:14px;background:#595959;box-shadow:none"></div>
<div class="a" style="left:561px;top:282px;width:13.5px;height:14px;border:1px solid #6c6c6c;border-radius:2px;background:#575757"></div>
<svg class="a" style="left:565px;top:287.4px" width="5.6" height="3.7" viewBox="0 0 6.4 4.2"><path d="M0,0 L6.4,0 L3.2,4.2 Z" fill="#888888"/></svg>
<div class="fld" style="left:577px;top:282px;width:64px;height:14px"></div>
<div class="t" style="left:580.50px;top:283.50px;font-size:9.9px;color:#696969;transform:scaleX(0.8451);">None</div>
<div class="fld" style="left:643px;top:282px;width:57px;height:14px"></div>
<div class="t" style="left:647.50px;top:283.50px;font-size:9.9px;color:#f4f4f4;transform:scaleX(0.7892);">SVG</div>
<svg class="a" style="left:690px;top:286.8px" width="7" height="5" viewBox="0 0 7 5"><path d="M0.7,0.9 L3.5,3.7 L6.3,0.9" fill="none" stroke="#e6e6e6" stroke-width="1.2"/></svg>
<svg class="a" style="left:704px;top:285.1px" width="7" height="7" viewBox="0 0 7 7"><path d="M0.4,0.4 L6.6,6.6 M6.6,0.4 L0.4,6.6" fill="none" stroke="#dadada" stroke-width="0.95"/></svg>
<div class="fld" style="left:518.7px;top:300px;width:198.5px;height:16.2px;background:#464646;border-radius:1.5px"></div>
<svg class="a" style="left:594.5px;top:304.1px" width="7" height="7" viewBox="0 0 7 7"><path d="M3.5,0.2 L3.5,6.8 M0.2,3.5 L6.8,3.5" stroke="#f6f6f6" stroke-width="1.25" fill="none"/></svg>
<div class="t" style="left:606.00px;top:302.50px;font-size:9.9px;color:#f6f6f6;transform:scaleX(0.7977);">Add Scale</div>
<div class="t" style="left:513.50px;top:329.90px;font-size:9.9px;color:#cdcdcd;transform:scaleX(0.8198);">Prefix:</div>
<div class="fld" style="left:540px;top:329px;width:46.5px;height:13.5px;background:#474747;border-radius:1.5px"></div>
<div class="pill" style="left:585.8px;top:357.8px;width:72.6px;height:18.6px;border:1.7px solid #f6f6f6;background:#484848"></div>
<div class="t" style="left:593.00px;top:361.70px;font-size:9.9px;color:#fbfbfb;transform:scaleX(0.8432);">Export Artboard</div>
<div class="pill" style="left:664.9px;top:357.9px;width:64.6px;height:18.4px;border:1.1px solid #dcdcdc;background:#4a4a4a"></div>
<div class="t" style="left:685.00px;top:361.70px;font-size:9.9px;color:#fbfbfb;transform:scaleX(0.7788);">Cancel</div>
<svg class="a" style="left:731px;top:384px" width="8" height="8" viewBox="0 0 8 8"><path d="M8,0 L8,8 L0,8 Z" fill="#5e5e5e"/></svg>
</body>
</html>
